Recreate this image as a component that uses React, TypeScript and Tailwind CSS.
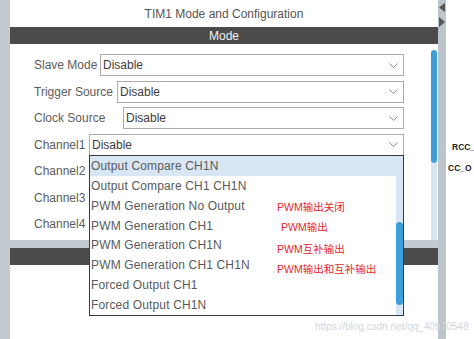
import React from "react";

const Chevron = () => (
  <svg width="9" height="5" viewBox="0 0 9 5" className="shrink-0">
    <polyline points="0.5,0.5 4.5,4.5 8.5,0.5" fill="none" stroke="#8a8a8a" strokeWidth="1" />
  </svg>
);

type Row = { label: string; w: string; box: boolean };

const rows: Row[] = [
  { label: "Slave Mode", w: "w-[66px]", box: true },
  { label: "Trigger Source", w: "w-[83px]", box: true },
  { label: "Clock Source", w: "w-[89px]", box: true },
  { label: "Channel1", w: "w-[55px]", box: true },
  { label: "Channel2", w: "w-[55px]", box: false },
  { label: "Channel3", w: "w-[55px]", box: false },
  { label: "Channel4", w: "w-[55px]", box: false },
];

const items = [
  "Output Compare CH1N",
  "Output Compare CH1 CH1N",
  "PWM Generation No Output",
  "PWM Generation CH1",
  "PWM Generation CH1N",
  "PWM Generation CH1 CH1N",
  "Forced Output CH1",
  "Forced Output CH1N",
];

export default function App() {
  return (
    <div className="relative w-[474px] h-[339px] overflow-hidden bg-white flex font-['Liberation_Sans',Arial,sans-serif]">
      <div className="w-[10px] shrink-0 bg-[#c3cbd1]" />
      <div className="w-[428px] shrink-0 flex flex-col">
        <div className="h-[27px] flex items-center justify-center text-[12px] text-[#555]">
          TIM1 Mode and Configuration
        </div>
        <div className="h-[17px] bg-[#4b4b4b] flex items-center justify-center text-[12px] text-[#f2f2f2]">
          Mode
        </div>
        <div className="h-[196px] flex">
          <div className="flex-1 pl-[24px] pr-[27px] pt-[10px] flex flex-col gap-[4.5px]">
            {rows.map((r) => (
              <div key={r.label} className="h-[22px] flex items-center">
                <div className={`${r.w} shrink-0 text-[12px] text-[#5c5c5c]`}>{r.label}</div>
                {r.box && (
                  <div className="flex-1 h-[22px] border border-[#ababab] flex items-center justify-between pl-[2px] pr-[5px]">
                    <span className="text-[12px] text-[#3c3c3c]">Disable</span>
                    <Chevron />
                  </div>
                )}
              </div>
            ))}
          </div>
          <div className="w-[6px] pt-[6px] flex flex-col">
            <div className="h-[113px] rounded-full bg-[#3a9fda]" />
            <div className="flex-1 bg-[#d6e6f3]" />
          </div>
          <div className="w-[1px]" />
        </div>
        <div className="h-[8px] bg-[#c3cbd1]" />
        <div className="h-[17px] bg-[#4b4b4b]" />
        <div className="flex-1 bg-white" />
      </div>
      <div className="w-[8px] shrink-0 bg-[#bcc5cb] relative">
        <svg width="8" height="30" viewBox="0 0 8 30" className="absolute left-0 top-0">
          <polygon points="7,3 1,7.5 7,12" fill="#555" />
          <polygon points="1,17 7,22 1,27" fill="#555" />
        </svg>
      </div>
      <div className="flex-1 relative">
        <div className="absolute left-[6px] top-[142px] text-[8.5px] font-bold text-[#222] leading-[10px]">RCC_</div>
        <div className="absolute left-[2px] top-[163px] text-[8.5px] font-bold text-[#222] leading-[10px]">CC_O</div>
      </div>

      {/* dropdown */}
      <div className="absolute left-[89px] top-[155px] w-[315px] h-[161px] border border-[#3a3a3a] bg-white flex">
        <div className="flex-1 flex flex-col">
          {items.map((it, i) => (
            <div
              key={it}
              className={`h-[20px] flex items-center pl-[1px] text-[12px] tracking-[0.15px] text-[#5a5a5a] ${i === 0 ? "bg-[#d9e7f5]" : ""}`}
            >
              {it}
            </div>
          ))}
        </div>
        <div className="w-[7px] bg-[#d6e6f3] flex flex-col pt-[66px]">
          <div className="h-[83px] rounded-full bg-[#3a9fda]" />
        </div>
      </div>

      {/* annotations */}
      <div className="absolute left-[277px] top-[201px] text-[10.5px] leading-[12px] text-[#e8262b] font-['Liberation_Sans','Noto_Sans_CJK_SC',sans-serif]">PWM输出关闭</div>
      <div className="absolute left-[281px] top-[221px] text-[10.5px] leading-[12px] text-[#e8262b] font-['Liberation_Sans','Noto_Sans_CJK_SC',sans-serif]">PWM输出</div>
      <div className="absolute left-[277px] top-[242.5px] text-[10.5px] leading-[12px] text-[#e8262b] font-['Liberation_Sans','Noto_Sans_CJK_SC',sans-serif]">PWM互补输出</div>
      <div className="absolute left-[277px] top-[263px] text-[10.5px] leading-[12px] text-[#e8262b] font-['Liberation_Sans','Noto_Sans_CJK_SC',sans-serif]">PWM输出和互补输出</div>

      {/* watermark */}
      <div className="absolute left-[315px] top-[320px] text-[10px] leading-[14px] text-[#d2d6da] whitespace-nowrap">
        https://blog.csdn.net/qq_40970548
      </div>
    </div>
  );
}
